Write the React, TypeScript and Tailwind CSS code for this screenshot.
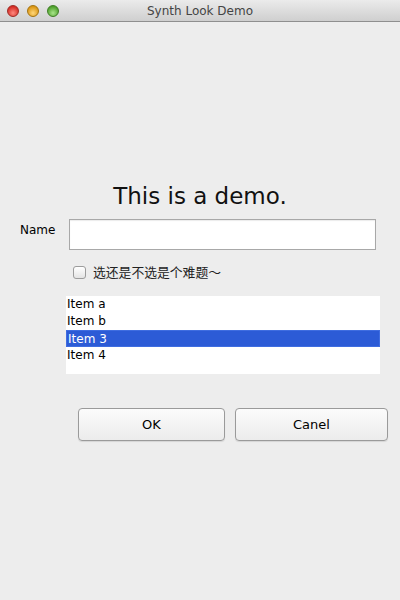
const items = ["Item a", "Item b", "Item 3", "Item 4"];

const TrafficLight = ({ from, to, ring }: { from: string; to: string; ring: string }) => (
  <div
    className={`w-[12px] h-[12px] rounded-full border ${ring}`}
    style={{ background: `radial-gradient(circle at 50% 70%, ${to} 0%, ${from} 75%)` }}
  />
);

const App = () => {
  return (
    <div
      className="w-[400px] h-[600px] bg-[#ededed] flex flex-col text-black"
      style={{ fontFamily: '"DejaVu Sans", "Noto Sans CJK SC", sans-serif' }}
    >
      {/* title bar */}
      <div className="h-[22px] shrink-0 flex items-center bg-gradient-to-b from-[#ebebeb] to-[#cfcfcf] border-b border-[#8f8f8f] relative">
        <div className="flex gap-[8px] pl-[7px]">
          <TrafficLight from="#d42a22" to="#ff8a80" ring="border-[#9e2b25]" />
          <TrafficLight from="#d99410" to="#ffd77a" ring="border-[#a4730f]" />
          <TrafficLight from="#4c9f2a" to="#a9e58a" ring="border-[#3e7d24]" />
        </div>
        <div className="absolute inset-0 flex items-center justify-center text-[12px] text-[#444]">
          Synth Look Demo
        </div>
      </div>

      <div className="flex flex-col">
        <div className="mt-[159px] h-[30px] leading-[30px] text-center text-[23px] text-[#111]">
          This is a demo.
        </div>

        <div className="mt-[8px] flex items-start">
          <div className="ml-[20px] w-[49px] mt-[3px] text-[12px] leading-[16px]">Name</div>
          <div className="w-[307px] h-[31px] bg-white border border-[#a8a8a8] shadow-[inset_0_1px_1px_rgba(0,0,0,0.08)]" />
        </div>

        <div className="mt-[16px] ml-[73px] flex items-center h-[13px]">
          <div className="w-[13px] h-[13px] rounded-[3px] border border-[#9c9c9c] bg-gradient-to-b from-white to-[#e4e4e4]" />
          <div className="ml-[7px] text-[12.8px] leading-[16px] text-[#222]">选还是不选是个难题～</div>
        </div>

        <div className="mt-[17px] ml-[66px] w-[314px] h-[78px] bg-white">
          {items.map((item, i) => (
            <div
              key={item}
              className={`h-[17px] leading-[17px] pl-[1px] text-[12px] ${
                i === 2 ? "bg-[#2c5bd6] text-white border border-[#3f6de0] leading-[15px]" : ""
              }`}
            >
              {item}
            </div>
          ))}
        </div>

        <div className="mt-[34px] flex">
          <button className="ml-[78px] w-[147px] h-[33px] rounded-[4px] border border-[#9a9a9a] bg-gradient-to-b from-[#fbfbfb] to-[#ececec] text-[13px] shadow-[0_1px_1px_rgba(0,0,0,0.1)]">
            OK
          </button>
          <button className="ml-[10px] w-[153px] h-[33px] rounded-[4px] border border-[#9a9a9a] bg-gradient-to-b from-[#fbfbfb] to-[#ececec] text-[13px] shadow-[0_1px_1px_rgba(0,0,0,0.1)]">
            Canel
          </button>
        </div>
      </div>
    </div>
  );
};

export default App;
